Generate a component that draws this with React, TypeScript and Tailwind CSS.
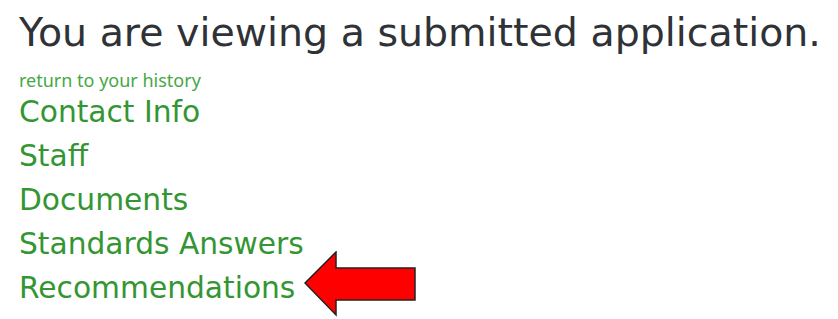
export default function App() {
  const sections = ["Contact Info", "Staff", "Documents", "Standards Answers", "Recommendations"];

  return (
    <div className="min-h-[319px] bg-white px-[19px] pt-[6px]" style={{ fontFamily: '"DejaVu Sans", sans-serif' }}>
      <h1 className="whitespace-nowrap text-[39.5px] leading-[52px] text-[#2f3236]">
        You are viewing a submitted application.
      </h1>
      <a href="#" className="mt-[12px] block text-[18px] leading-[20px] text-[#45a845]" style={{ fontFamily: '"Noto Sans", sans-serif' }}>
        return to your history
      </a>
      <ul className="flex flex-col">
        {sections.map((s) => (
          <li key={s} className="whitespace-nowrap text-[29.7px] leading-[44px]">
            <a href="#" className="relative text-[#339633]">
              {s}
              {s === "Recommendations" && (
                <svg width="113" height="66" viewBox="0 0 113 66" className="absolute left-full top-[-19px] ml-[9px]">
                  <polygon
                    points="1,32 32,1 32,17 111,17 111,49 32,49 32,64"
                    fill="#ff0000"
                    stroke="#222"
                    strokeWidth="1.5"
                  />
                </svg>
              )}
            </a>
          </li>
        ))}
      </ul>
    </div>
  );
}
